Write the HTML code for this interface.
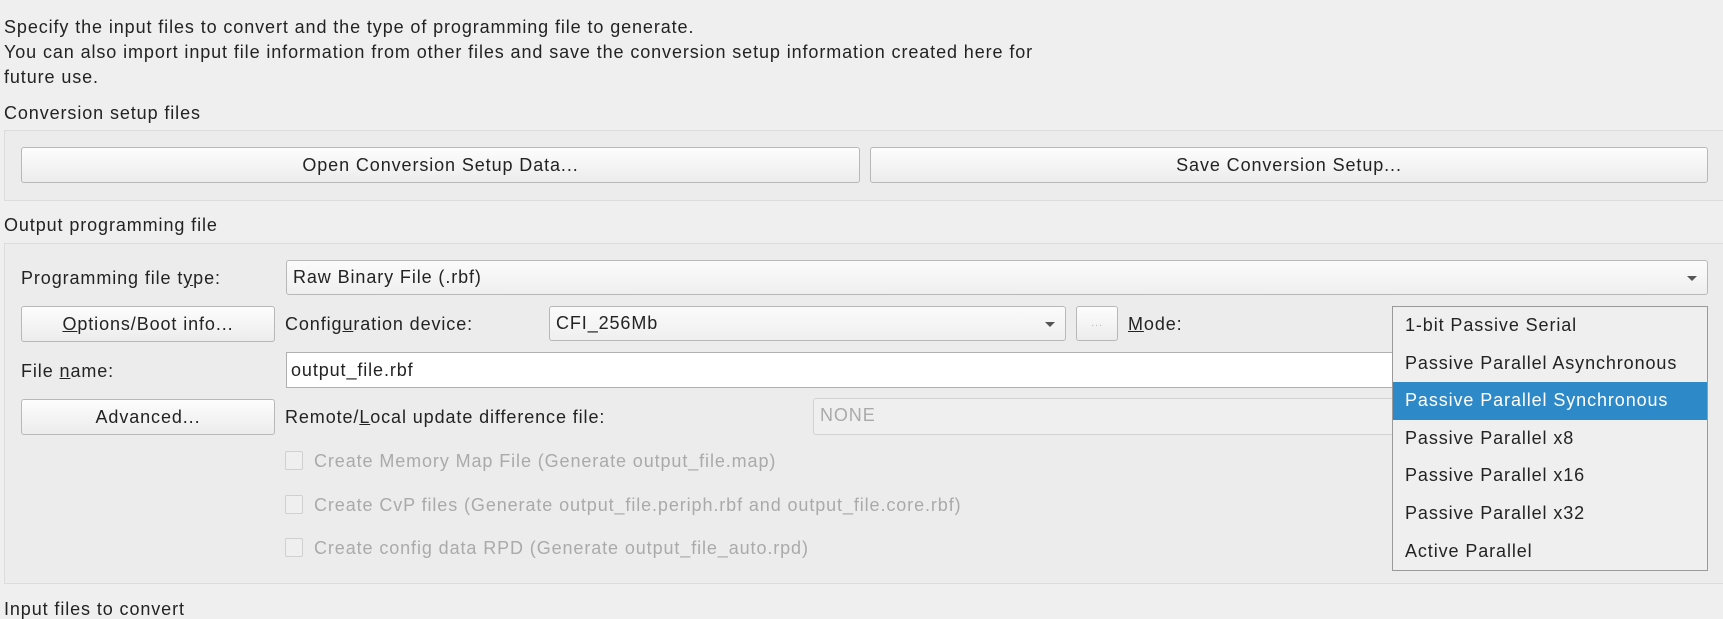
<!DOCTYPE html>
<html><head><meta charset="utf-8"><style>
*{box-sizing:border-box;margin:0;padding:0}
body{width:1723px;height:601px;background:#efefef;font-family:"Liberation Sans",sans-serif;font-size:18px;letter-spacing:0.9px;color:#232323;position:relative;overflow:hidden}
.a{position:absolute;white-space:nowrap}
.t{line-height:20px}
.box{position:absolute;border:1px solid #dcdcdc;background:#ececec;border-right:none}
.btn{position:absolute;border:1px solid #b8b8b8;border-radius:3px;background:linear-gradient(#fdfdfd,#ececec);text-align:center;line-height:34px}
.cb{position:absolute;border:1px solid #b8b8b8;border-radius:3px;background:linear-gradient(#fbfbfb,#efefef);line-height:33px;padding-left:6px}
.arr{position:absolute;right:10px;top:15px;width:0;height:0;border-left:5px solid transparent;border-right:5px solid transparent;border-top:5px solid #555}
.fld{position:absolute;border:1px solid #b0b0b0;background:#fff;line-height:34px;padding-left:4px}
.chk{position:absolute;width:18px;height:19px;border:1px solid #d0d0d0;border-radius:2px;background:#efefef}
.dis{color:#aaa}
.pop{position:absolute;left:1392px;top:306px;width:316px;height:265px;background:#efefef;border:1px solid #9a9a9a}
.pop div{height:37.6px;line-height:37.6px;padding-left:12px}
.sel{background:#2e89c9;color:#fff}
u{text-decoration:underline}
</style></head><body>
<div class="a t" style="left:4px;top:17px">Specify the input files to convert and the type of programming file to generate.</div>
<div class="a t" style="left:4px;top:42px">You can also import input file information from other files and save the conversion setup information created here for</div>
<div class="a t" style="left:4px;top:67px">future use.</div>
<div class="a t" style="left:4px;top:103px">Conversion setup files</div>
<div class="box" style="left:4px;top:130px;width:1719px;height:71px"></div>
<div class="btn" style="left:21px;top:147px;width:839px;height:36px">Open Conversion Setup Data...</div>
<div class="btn" style="left:870px;top:147px;width:838px;height:36px">Save Conversion Setup...</div>
<div class="a t" style="left:4px;top:215px">Output programming file</div>
<div class="box" style="left:4px;top:243px;width:1719px;height:341px"></div>
<div class="a t" style="left:21px;top:268px">Programming file t<u>y</u>pe:</div>
<div class="cb" style="left:286px;top:260px;width:1422px;height:35px">Raw Binary File (.rbf)<span class="arr"></span></div>
<div class="btn" style="left:21px;top:306px;width:254px;height:36px"><u>O</u>ptions/Boot info...</div>
<div class="a t" style="left:285px;top:314px">Config<u>u</u>ration device:</div>
<div class="cb" style="left:549px;top:306px;width:517px;height:35px">CFI_256Mb<span class="arr"></span></div>
<div class="btn" style="left:1076px;top:306px;width:42px;height:35px;color:#bbb;font-size:11px;line-height:33px">...</div>
<div class="a t" style="left:1128px;top:314px"><u>M</u>ode:</div>
<div class="a t" style="left:21px;top:361px">File <u>n</u>ame:</div>
<div class="fld" style="left:286px;top:352px;width:1120px;height:36px">output_file.rbf</div>
<div class="btn" style="left:21px;top:399px;width:254px;height:36px">Advanced...</div>
<div class="a t" style="left:285px;top:407px">Remote/<u>L</u>ocal update difference file:</div>
<div class="cb dis" style="left:813px;top:398px;width:600px;height:37px;border-color:#d2d2d2;background:#efefef">NONE</div>
<div class="chk" style="left:285px;top:451px"></div>
<div class="a t dis" style="left:314px;top:451px">Create Memory Map File (Generate output_file.map)</div>
<div class="chk" style="left:285px;top:495px"></div>
<div class="a t dis" style="left:314px;top:495px">Create CvP files (Generate output_file.periph.rbf and output_file.core.rbf)</div>
<div class="chk" style="left:285px;top:538px"></div>
<div class="a t dis" style="left:314px;top:538px">Create config data RPD (Generate output_file_auto.rpd)</div>
<div class="a t" style="left:4px;top:599px">Input files to convert</div>
<div class="pop">
<div>1-bit Passive Serial</div>
<div>Passive Parallel Asynchronous</div>
<div class="sel">Passive Parallel Synchronous</div>
<div>Passive Parallel x8</div>
<div>Passive Parallel x16</div>
<div>Passive Parallel x32</div>
<div>Active Parallel</div>
</div>
</body></html>
